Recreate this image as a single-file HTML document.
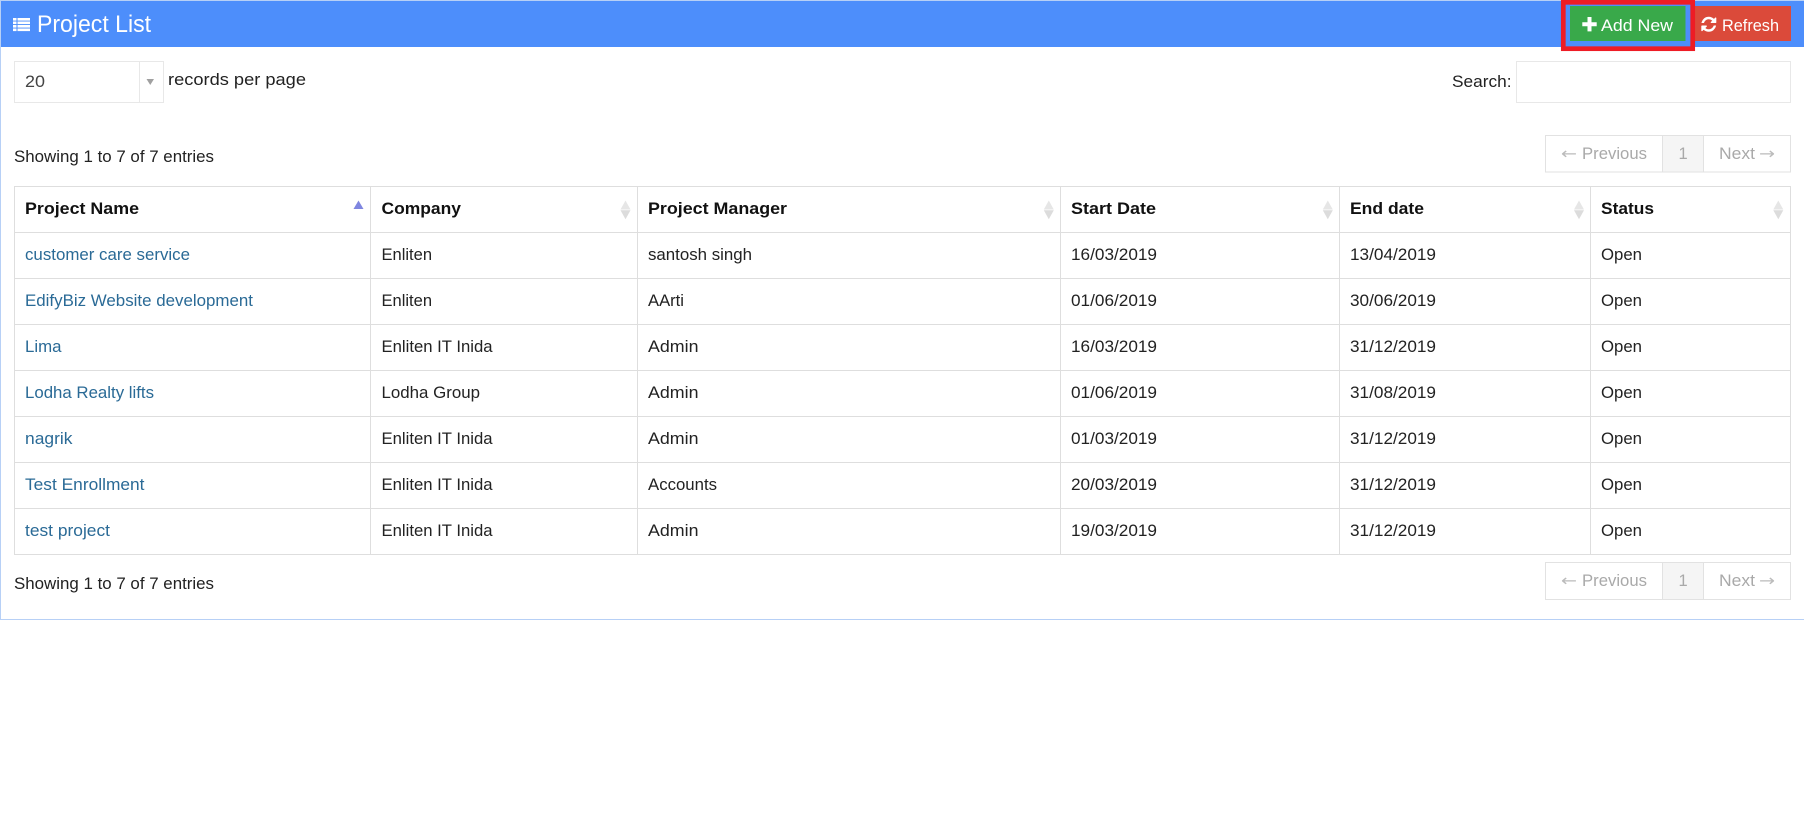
<!DOCTYPE html>
<html lang="en">
<head>
<meta charset="utf-8">
<title>Project List</title>
<style>
html,body{margin:0;padding:0;background:#fff;width:1804px;height:824px;overflow:hidden}
svg{display:block}
text{font-family:"Liberation Sans",sans-serif;font-size:16.5px;fill:#222}
.l{fill:#2a6a96}
.h{font-weight:700;fill:#111}
.p{fill:#a9a9a9}
.a{font-family:"DejaVu Sans",sans-serif;fill:#bbb;font-size:16px}
.line{stroke:#dedede;stroke-width:1;fill:none}
</style>
</head>
<body>
<svg width="1804" height="824" viewBox="0 0 1804 824" xmlns="http://www.w3.org/2000/svg">
<rect width="1804" height="824" fill="#fff"/>
<path d="M.5 0V619.5H1804" fill="none" stroke="#b7d0f6"/>
<rect x="0" y="0" width="1804" height="1" fill="#b7d0f6"/>
<rect x="1" y="1" width="1803" height="46" fill="#4d8efb"/>
<g fill="#fff">
<rect x="13" y="18" width="3.5" height="2.6"/><rect x="17.500" y="18" width="12.500" height="2.6"/>
<rect x="13" y="21.500" width="3.5" height="2.6"/><rect x="17.500" y="21.500" width="12.500" height="2.6"/>
<rect x="13" y="25" width="3.5" height="2.6"/><rect x="17.500" y="25" width="12.500" height="2.6"/>
<rect x="13" y="28.500" width="3.5" height="2.6"/><rect x="17.500" y="28.500" width="12.500" height="2.6"/>
</g>
<text x="37" y="32" textLength="114" lengthAdjust="spacingAndGlyphs" style="font-size:24px;fill:#fff">Project List</text>
<rect x="1570" y="6" width="115.500" height="35" fill="#39a94a"/>
<path d="M1587.500 17h4v5.200h5.200v4h-5.200v5.200h-4v-5.200h-5.200v-4h5.200z" fill="#fff"/>
<text x="1601" y="31" textLength="72" lengthAdjust="spacingAndGlyphs" style="font-size:17px;fill:#fff">Add New</text>
<rect x="1695" y="6" width="96" height="35" fill="#db4a3a"/>
<g transform="translate(1701.300 16.800) scale(.00977) translate(-128 -128)">
<path fill="#fff" d="M1639 1056q0 5-1 7-64 268-268 434.500t-478 166.500q-146 0-282.500-55t-243.500-157l-129 129q-19 19-45 19t-45-19-19-45v-448q0-26 19-45t45-19h448q26 0 45 19t19 45-19 45l-137 137q71 66 161 102t187 36q134 0 250-65t186-179q11-17 53-117 8-23 30-23h192q13 0 22.500 9.500t9.500 22.500zm25-800v448q0 26-19 45t-45 19h-448q-26 0-45-19t-19-45 19-45l138-138q-148-137-349-137-134 0-250 65t-186 179q-11 17-53 117-8 23-30 23h-199q-13 0-22.500-9.500t-9.500-22.500v-7q65-268 270-434.500t480-166.500q146 0 284 55.500t245 156.500l130-129q19-19 45-19t45 19 19 45z"/>
</g>
<text x="1722" y="31" textLength="57" lengthAdjust="spacingAndGlyphs" style="font-size:17px;fill:#fff">Refresh</text>
<rect x="1563.300" y="2.300" width="129.400" height="46.400" fill="none" stroke="#ee1c25" stroke-width="4.700"/>
<rect x="14.500" y="61.500" width="149" height="41" fill="#fff" stroke="#e8e8e8"/>
<path d="M139.500 62V102" stroke="#e8e8e8"/>
<path d="M146.500 79h7.500l-3.750 6z" fill="#a0a0a0"/>
<text x="25" y="87" textLength="20" lengthAdjust="spacingAndGlyphs" style="font-size:17px;fill:#444">20</text>
<text x="168" y="85" textLength="138" lengthAdjust="spacingAndGlyphs" style="font-size:17px">records per page</text>
<text x="1452" y="87" textLength="59.500" lengthAdjust="spacingAndGlyphs" style="font-size:17px">Search:</text>
<rect x="1516.500" y="61.500" width="274" height="41" fill="#fff" stroke="#e8e8e8"/>
<text x="14" y="162" textLength="200" lengthAdjust="spacingAndGlyphs">Showing 1 to 7 of 7 entries</text>
<text x="14" y="589" textLength="200" lengthAdjust="spacingAndGlyphs">Showing 1 to 7 of 7 entries</text>
<rect x="1545.500" y="135.500" width="245" height="36.500" fill="#fff" stroke="#e2e2e2"/>
<rect x="1662.500" y="135.500" width="41" height="36.500" fill="#f5f5f5" stroke="#e2e2e2"/>
<text class="a" x="1561" y="159" textLength="16" lengthAdjust="spacingAndGlyphs">←</text>
<text class="p" x="1582" y="159" textLength="65" lengthAdjust="spacingAndGlyphs">Previous</text>
<text class="p" x="1678.500" y="159">1</text>
<text class="p" x="1719" y="159" textLength="36" lengthAdjust="spacingAndGlyphs">Next</text>
<text class="a" x="1759" y="159" textLength="16" lengthAdjust="spacingAndGlyphs">→</text>
<rect x="1545.500" y="562.500" width="245" height="37" fill="#fff" stroke="#e2e2e2"/>
<rect x="1662.500" y="562.500" width="41" height="37" fill="#f5f5f5" stroke="#e2e2e2"/>
<text class="a" x="1561" y="586" textLength="16" lengthAdjust="spacingAndGlyphs">←</text>
<text class="p" x="1582" y="586" textLength="65" lengthAdjust="spacingAndGlyphs">Previous</text>
<text class="p" x="1678.500" y="586">1</text>
<text class="p" x="1719" y="586" textLength="36" lengthAdjust="spacingAndGlyphs">Next</text>
<text class="a" x="1759" y="586" textLength="16" lengthAdjust="spacingAndGlyphs">→</text>
<path class="line" d="M14.500 186.500H1790.500V554.500H14.500Z
M14.500 232.500H1790.500M14.500 278.500H1790.500M14.500 324.500H1790.500M14.500 370.500H1790.500M14.500 416.500H1790.500M14.500 462.500H1790.500M14.500 508.500H1790.500
M370.500 186.500V554.500M637.500 186.500V554.500M1060.500 186.500V554.500M1339.500 186.500V554.500M1590.500 186.500V554.500"/>
<path d="M353.500 209h10l-5-8.500z" fill="#7f86e0"/>
<g fill="#e6e6e6">
<path d="M620.500 209.500h10l-5-9z"/><path d="M1043.800 209.500h10l-5-9z"/><path d="M1322.800 209.500h10l-5-9z"/><path d="M1574 209.500h10l-5-9z"/><path d="M1773.300 209.500h10l-5-9z"/>
</g>
<g fill="#dcdcdc">
<path d="M620.500 210.300h10l-5 9z"/><path d="M1043.800 210.300h10l-5 9z"/><path d="M1322.800 210.300h10l-5 9z"/><path d="M1574 210.300h10l-5 9z"/><path d="M1773.300 210.300h10l-5 9z"/>
</g>
<g transform="translate(0 -1)">
<text class="h" x="25" y="215" textLength="114" lengthAdjust="spacingAndGlyphs">Project Name</text>
<text class="h" x="381.500" y="215" textLength="79.500" lengthAdjust="spacingAndGlyphs">Company</text>
<text class="h" x="648" y="215" textLength="139" lengthAdjust="spacingAndGlyphs">Project Manager</text>
<text class="h" x="1071" y="215" textLength="85" lengthAdjust="spacingAndGlyphs">Start Date</text>
<text class="h" x="1350" y="215" textLength="74" lengthAdjust="spacingAndGlyphs">End date</text>
<text class="h" x="1601" y="215" textLength="53" lengthAdjust="spacingAndGlyphs">Status</text>

<text class="l" x="25" y="261" textLength="165" lengthAdjust="spacingAndGlyphs">customer care service</text>
<text x="381.500" y="261" textLength="50.500" lengthAdjust="spacingAndGlyphs">Enliten</text>
<text x="648" y="261" textLength="104" lengthAdjust="spacingAndGlyphs">santosh singh</text>
<text x="1071" y="261" textLength="86" lengthAdjust="spacingAndGlyphs">16/03/2019</text>
<text x="1350" y="261" textLength="86" lengthAdjust="spacingAndGlyphs">13/04/2019</text>
<text x="1601" y="261" textLength="41" lengthAdjust="spacingAndGlyphs">Open</text>

<text class="l" x="25" y="307" textLength="228" lengthAdjust="spacingAndGlyphs">EdifyBiz Website development</text>
<text x="381.500" y="307" textLength="50.500" lengthAdjust="spacingAndGlyphs">Enliten</text>
<text x="648" y="307" textLength="36" lengthAdjust="spacingAndGlyphs">AArti</text>
<text x="1071" y="307" textLength="86" lengthAdjust="spacingAndGlyphs">01/06/2019</text>
<text x="1350" y="307" textLength="86" lengthAdjust="spacingAndGlyphs">30/06/2019</text>
<text x="1601" y="307" textLength="41" lengthAdjust="spacingAndGlyphs">Open</text>

<text class="l" x="25" y="353" textLength="36.500" lengthAdjust="spacingAndGlyphs">Lima</text>
<text x="381.500" y="353" textLength="111" lengthAdjust="spacingAndGlyphs">Enliten IT Inida</text>
<text x="648" y="353" textLength="50.500" lengthAdjust="spacingAndGlyphs">Admin</text>
<text x="1071" y="353" textLength="86" lengthAdjust="spacingAndGlyphs">16/03/2019</text>
<text x="1350" y="353" textLength="86" lengthAdjust="spacingAndGlyphs">31/12/2019</text>
<text x="1601" y="353" textLength="41" lengthAdjust="spacingAndGlyphs">Open</text>

<text class="l" x="25" y="399" textLength="129" lengthAdjust="spacingAndGlyphs">Lodha Realty lifts</text>
<text x="381.500" y="399" textLength="98.500" lengthAdjust="spacingAndGlyphs">Lodha Group</text>
<text x="648" y="399" textLength="50.500" lengthAdjust="spacingAndGlyphs">Admin</text>
<text x="1071" y="399" textLength="86" lengthAdjust="spacingAndGlyphs">01/06/2019</text>
<text x="1350" y="399" textLength="86" lengthAdjust="spacingAndGlyphs">31/08/2019</text>
<text x="1601" y="399" textLength="41" lengthAdjust="spacingAndGlyphs">Open</text>

<text class="l" x="25" y="445" textLength="47.500" lengthAdjust="spacingAndGlyphs">nagrik</text>
<text x="381.500" y="445" textLength="111" lengthAdjust="spacingAndGlyphs">Enliten IT Inida</text>
<text x="648" y="445" textLength="50.500" lengthAdjust="spacingAndGlyphs">Admin</text>
<text x="1071" y="445" textLength="86" lengthAdjust="spacingAndGlyphs">01/03/2019</text>
<text x="1350" y="445" textLength="86" lengthAdjust="spacingAndGlyphs">31/12/2019</text>
<text x="1601" y="445" textLength="41" lengthAdjust="spacingAndGlyphs">Open</text>

<text class="l" x="25" y="491" textLength="119.500" lengthAdjust="spacingAndGlyphs">Test Enrollment</text>
<text x="381.500" y="491" textLength="111" lengthAdjust="spacingAndGlyphs">Enliten IT Inida</text>
<text x="648" y="491" textLength="69" lengthAdjust="spacingAndGlyphs">Accounts</text>
<text x="1071" y="491" textLength="86" lengthAdjust="spacingAndGlyphs">20/03/2019</text>
<text x="1350" y="491" textLength="86" lengthAdjust="spacingAndGlyphs">31/12/2019</text>
<text x="1601" y="491" textLength="41" lengthAdjust="spacingAndGlyphs">Open</text>

<text class="l" x="25" y="537" textLength="85" lengthAdjust="spacingAndGlyphs">test project</text>
<text x="381.500" y="537" textLength="111" lengthAdjust="spacingAndGlyphs">Enliten IT Inida</text>
<text x="648" y="537" textLength="50.500" lengthAdjust="spacingAndGlyphs">Admin</text>
<text x="1071" y="537" textLength="86" lengthAdjust="spacingAndGlyphs">19/03/2019</text>
<text x="1350" y="537" textLength="86" lengthAdjust="spacingAndGlyphs">31/12/2019</text>
<text x="1601" y="537" textLength="41" lengthAdjust="spacingAndGlyphs">Open</text>
</g>
</svg>
</body>
</html>
